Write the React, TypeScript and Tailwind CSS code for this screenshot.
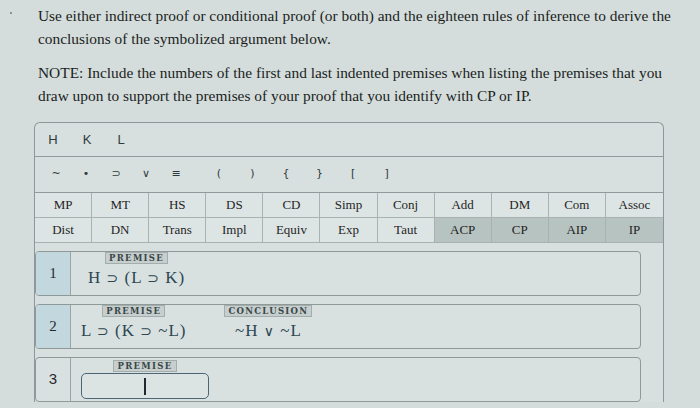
import React from 'react';

const rulesTop = ['MP', 'MT', 'HS', 'DS', 'CD', 'Simp', 'Conj', 'Add', 'DM', 'Com', 'Assoc'];
const rulesBottom = ['Dist', 'DN', 'Trans', 'Impl', 'Equiv', 'Exp', 'Taut', 'ACP', 'CP', 'AIP', 'IP'];
const shaded = ['ACP', 'CP', 'AIP', 'IP'];

const Tag = ({ children }: { children: React.ReactNode }) => (
  <div className="h-[12px] px-[3px] flex items-center bg-[#c6cfce] border border-[#a3adac] text-[8.5px] font-bold tracking-[1.3px] leading-none text-[#3a4748] font-['DejaVu_Serif',serif]">
    {children}
  </div>
);

// connectives are drawn smaller than the letters, like in the original
const Formula = ({ text }: { text: string }) => (
  <div className="mt-[3px] text-[17px] leading-[22px] tracking-[1px] text-[#2c4652] font-['Liberation_Serif','DejaVu_Serif',serif] whitespace-pre">
    {text.split('').map((c, i) =>
      c === '⊃' || c === '∨' ? (
        <span key={i} className="text-[14px] font-['DejaVu_Sans',sans-serif]">
          {c}
        </span>
      ) : (
        <span key={i}>{c}</span>
      )
    )}
  </div>
);

const App = () => {
  return (
    <div className="w-[700px] h-[408px] overflow-hidden bg-[#d4dddb] font-['Liberation_Serif',serif]">
      {/* Instructions */}
      <div className="relative pl-[38px] pr-[16px] pt-[4px] text-[15.4px] leading-[23px] text-[#1b1d1d]">
        <span className="absolute left-[10px] top-[12px] w-[2px] h-[2px] rounded-full bg-[#777]" />
        <p>
          Use either indirect proof or conditional proof (or both) and the eighteen rules of inference to derive the
          conclusions of the symbolized argument below.
        </p>
        <p className="mt-[11px]">
          NOTE: Include the numbers of the first and last indented premises when listing the premises that you draw
          upon to support the premises of your proof that you identify with CP or IP.
        </p>
      </div>

      {/* Proof panel */}
      <div className="ml-[34px] mt-[15px] w-[630px] border-[1.5px] border-b-0 border-[#8c9897] rounded-t-[6px] bg-[#d8e0df]">
        {/* Variables */}
        <div className="h-[34px] flex items-center border-b border-[#8f9b9a] font-['Liberation_Sans',sans-serif] text-[13px] text-[#2f3a3c]">
          {['H', 'K', 'L'].map((v) => (
            <span key={v} className="w-[34px] text-center first:ml-[1px]">
              {v}
            </span>
          ))}
        </div>

        {/* Symbols */}
        <div className="h-[36px] flex items-center border-b border-[#8f9b9a] font-['DejaVu_Sans',sans-serif] text-[11px] text-[#2f3a3c]">
          <div className="w-[6px]" />
          {['~', '•', '⊃', '∨', '≡'].map((s) => (
            <span key={s} className="w-[30px] text-center">
              {s}
            </span>
          ))}
          <div className="w-[11px]" />
          {['(', ')', '{', '}', '[', ']'].map((s) => (
            <span key={s} className="w-[33.6px] text-center">
              {s}
            </span>
          ))}
        </div>

        {/* Rules */}
        <div className="grid grid-cols-11 text-[13px] text-[#1f2424]">
          {[...rulesTop, ...rulesBottom].map((r, i) => (
            <div
              key={r}
              className={`h-[25px] flex items-center justify-center border-r border-b border-[#a7b2b1] ${
                i % 11 === 10 ? 'border-r-0' : ''
              } ${shaded.includes(r) ? 'bg-[#b7c3c1]' : 'bg-[#dde5e4]'}`}
            >
              {r}
            </div>
          ))}
        </div>

        {/* Proof lines */}
        <div className="pt-[8px] pr-[22px] flex flex-col gap-[8px]">
          <div className="h-[45px] flex border border-[#8e9998] rounded-[4px] bg-[#d9e1e0] overflow-hidden">
            <div className="w-[35px] flex items-center justify-center bg-[#c3d7de] border-r border-[#9aa6a5] text-[15px] text-[#1f2a2e]">
              1
            </div>
            <div className="pl-[17px] flex flex-col items-center">
              <Tag>PREMISE</Tag>
              <Formula text="H ⊃ (L ⊃ K)" />
            </div>
          </div>

          <div className="h-[45px] flex border border-[#8e9998] rounded-[4px] bg-[#d9e1e0] overflow-hidden">
            <div className="w-[35px] flex items-center justify-center bg-[#c3d7de] border-r border-[#9aa6a5] text-[15px] text-[#1f2a2e]">
              2
            </div>
            <div className="pl-[10px] flex flex-col items-center">
              <Tag>PREMISE</Tag>
              <Formula text="L ⊃ (K ⊃ ~L)" />
            </div>
            <div className="ml-[38px] flex flex-col items-center">
              <Tag>CONCLUSION</Tag>
              <Formula text="~H ∨ ~L" />
            </div>
          </div>

          <div className="h-[45px] flex border border-[#8e9998] rounded-[4px] bg-[#d9e1e0] overflow-hidden">
            <div className="w-[35px] flex items-center justify-center border-r border-[#9aa6a5] text-[15px] text-[#1f2a2e] font-['Liberation_Sans',sans-serif]">
              3
            </div>
            <div className="pl-[10px] pt-[2px] flex flex-col items-center">
              <Tag>PREMISE</Tag>
              <div className="mt-[1px] w-[128px] h-[26px] rounded-[5px] border-[1.5px] border-[#4d6677] bg-[#dce4e3] flex items-center justify-center">
                <span className="w-[1.5px] h-[17px] bg-[#1e2a30]" />
              </div>
            </div>
          </div>
        </div>
      </div>
    </div>
  );
};

export default App;
